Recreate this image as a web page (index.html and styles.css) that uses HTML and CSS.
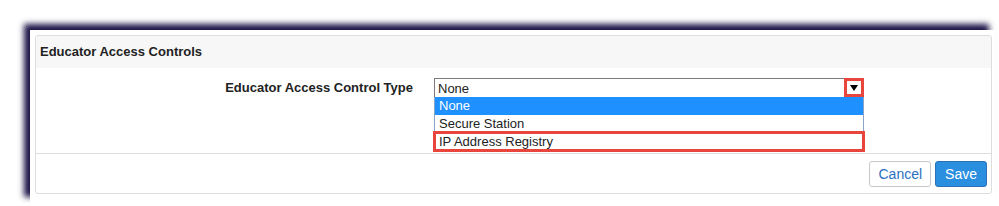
FILE: index.html
```html
<!DOCTYPE html>
<html lang="en">
<head>
  <meta charset="UTF-8" />
  <title>Educator Access Controls</title>
  <link rel="stylesheet" href="styles.css">
</head>
<body>
  <!-- recorte da tela -->
  <div class="shot">
    <div class="panel">
      <div class="panel-heading">Educator Access Controls</div>

      <div class="panel-body">
        <div class="form-row">
          <label class="control-label">Educator Access Control Type</label>
          <div class="picker">
            <div class="select">
              <span class="select-value">None</span>
              <span class="arrow"><i></i></span>
            </div>
            <ul class="options">
              <li class="selected">None</li>
              <li>Secure Station</li>
              <li class="marked">IP Address Registry</li>
            </ul>
          </div>
        </div>
      </div>

      <div class="panel-footer">
        <button class="btn btn-default">Cancel</button>
        <button class="btn btn-primary">Save</button>
      </div>
    </div>
  </div>
</body>
</html>
```

FILE: styles.css
```css
:root {
  --frame: #1d1548;
  --line: #dddddd;
  --red: #e8453c;
  --blue: #1e90ff;
}

body {
  margin: 0;
  background: white;
  font-family: 'Liberation Sans', Arial, sans-serif;
  color: #222;
}

.shot {
  width: 957px;
  margin: 30px 0 0 30px;
  padding: 5px 3px 9px 5px;
  background: white;
  box-shadow: -6px -6px 6px var(--frame);
}

.panel {
  border: 1px solid var(--line);
  border-radius: 3px;
  background: white;
}

.panel-heading {
  background: #f7f7f7;
  font-size: 13px;
  font-weight: bold;
  line-height: 32px;
  padding: 0 4px;
  border-radius: 3px 3px 0 0;
}

.panel-body {
  padding: 10px 0 2px;
}

.form-row {
  display: flex;
  align-items: flex-start;
}

.control-label {
  width: 377px;
  margin-right: 21px;
  text-align: right;
  font-size: 13px;
  font-weight: bold;
  line-height: 19px;
}

.picker {
  width: 430px;
}

.select {
  display: flex;
  align-items: center;
  height: 19px;
  box-sizing: border-box;
  border: 1px solid #7a7a7a;
  border-bottom: none;
  font-size: 13px;
}

.select-value {
  flex: 1;
  padding-left: 3px;
}

.arrow {
  width: 20px;
  height: 19px;
  box-sizing: border-box;
  border: 3px solid var(--red);
  margin-right: -1px;
  margin-top: -1px;
  display: flex;
  align-items: center;
  justify-content: center;
}

.arrow i {
  width: 0;
  height: 0;
  border-left: 4px solid transparent;
  border-right: 4px solid transparent;
  border-top: 6px solid #000;
  margin-top: 1px;
}

.options {
  list-style: none;
  margin: 0;
  padding: 0;
  border: 1px solid #8aa4c8;
  border-top: none;
  font-size: 13px;
}

.options li {
  height: 17px;
  line-height: 17px;
  padding-left: 4px;
}

.options li.selected {
  background: var(--blue);
  color: white;
  height: 18px;
  line-height: 17px;
}

.options li.marked {
  outline: 3px solid var(--red);
  outline-offset: -1px;
  margin-top: 1px;
}

.panel-footer {
  border-top: 1px solid var(--line);
  padding: 7px 4px 6px;
  display: flex;
  justify-content: flex-end;
  gap: 4px;
}

.btn {
  font-family: 'Liberation Sans', Arial, sans-serif;
  font-size: 14px;
  height: 26px;
  padding: 0 9px;
  border-radius: 3px;
  cursor: pointer;
}

.btn-default {
  background: white;
  border: 1px solid #c8c8c8;
  color: #2a6fbf;
  padding: 0 8px;
}

.btn-primary {
  background: #2b8fe0;
  border: 1px solid #2a72b5;
  color: white;
}
```
